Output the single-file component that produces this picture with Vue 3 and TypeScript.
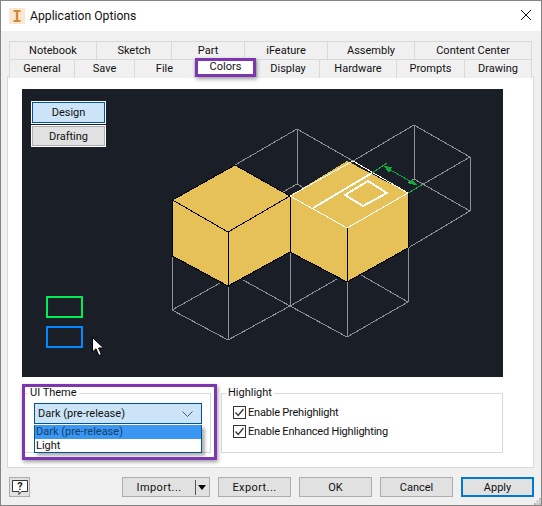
<script setup lang="ts">
const topTabs = ['Notebook', 'Sketch', 'Part', 'iFeature', 'Assembly', 'Content Center']
const bottomTabs = ['General', 'Save', 'File', 'Colors', 'Display', 'Hardware', 'Prompts', 'Drawing']

const wire = [
  'M235 165L297 129L353 161', 'M297 129V184', 'M297 184L283 192', 'M297 184L304 188',
  'M353 161L414 125L470 157V211', 'M414 125V179', 'M414 179L470 211', 'M470 157L408 193', 'M414 179L408 183',
  'M470 211L408 248',
  'M172 256V310', 'M172 310L220 283', 'M172 310L228 340', 'M228 286V340', 'M228 340L290 306',
  'M290 252V306', 'M290 306L243 280', 'M290 306L337 279', 'M290 306L347 337', 'M347 282V337',
  'M347 337L408 302', 'M408 248V302', 'M408 302L361 275',
]
</script>

<template>
  <div class="window">
    <header class="titlebar">
      <svg class="app-icon" width="16" height="16" viewBox="0 0 16 16">
        <rect width="16" height="16" fill="#fde6d0" />
        <path d="M4.5 2H11.5V4H9.2V12H11.5V14H4.5V12H6.8V4H4.5Z" fill="#d08a3c" />
      </svg>
      <span class="title">Application Options</span>
      <svg class="close" width="10" height="10" viewBox="0 0 10 10">
        <path d="M0 0L10 10M10 0L0 10" stroke="#111" stroke-width="1" fill="none" />
      </svg>
    </header>

    <main class="body">
      <div class="tabs">
        <div class="tab-row row-top">
          <div v-for="t in topTabs" :key="t" class="tab">{{ t }}</div>
        </div>
        <div class="tab-row row-bottom">
          <div v-for="t in bottomTabs" :key="t" class="tab" :class="{ active: t === 'Colors' }">
            {{ t }}
            <span v-if="t === 'Colors'" class="callout callout-tab"></span>
          </div>
        </div>
      </div>

      <section class="panel">
        <div class="canvas">
          <svg class="scene" width="481" height="288" viewBox="22 89 481 288" shape-rendering="crispEdges">
            <path v-for="d in wire" :key="d" :d="d" stroke="#8f9194" fill="none" />
            <path d="M172.5 200L235 165L290 196L347 161L408 193V248L347 282L290 252L228 286L172.5 256Z" fill="#e5c158" />
            <path d="M172.5 200L235 165L290 196L228 232ZM172.5 200V256L228 286V232M290 196V252M228 286L290 252" stroke="#000" fill="none" />
            <path d="M290 252L347 282L408 248V193" stroke="#000" fill="none" />
            <path d="M347 228V282" stroke="#000" fill="none" />
            <path d="M290 196L353 161L408 193L347 228Z" stroke="#fff" fill="none" />
            <path d="M313 208L372 173" stroke="#fff" stroke-width="2" fill="none" />
            <path d="M368 181L387 193L363 206L345 195Z" stroke="#fff" stroke-width="2" fill="none" />
            <path d="M372 173L387 163M408 193L423 184M387 168L415 184" stroke="#0fa83c" fill="none" />
            <path d="M384 166L392 167L389 173ZM417 185L409 184L412 179Z" fill="#0fa83c" />
          </svg>
          <div class="view-switch">
            <button class="view-btn selected">Design</button>
            <button class="view-btn">Drafting</button>
          </div>
          <div class="swatch green"></div>
          <div class="swatch blue"></div>
          <svg class="cursor" width="14" height="20" viewBox="0 0 14 20">
            <path d="M1.5 .5V15L5 11.8L7.8 18.5L10.4 17.4L7.6 11H12.5Z" fill="#fff" stroke="#000" />
          </svg>
        </div>

        <div class="groups">
          <fieldset class="group theme">
            <legend>UI Theme</legend>
            <div class="combo">
              <span>Dark (pre-release)</span>
              <svg width="11" height="6" viewBox="0 0 11 6"><path d="M.5 .5L5.5 5.5L10.5 .5" stroke="#555" fill="none" /></svg>
            </div>
            <ul class="list">
              <li class="current">Dark (pre-release)</li>
              <li>Light</li>
            </ul>
            <span class="callout callout-theme"></span>
          </fieldset>
          <fieldset class="group highlight">
            <legend>Highlight</legend>
            <label class="check">
              <svg width="13" height="13" viewBox="0 0 13 13"><rect x=".5" y=".5" width="12" height="12" fill="#fff" stroke="#333" /><path d="M2.5 6.5L5.2 9.5L10.5 3" stroke="#333" stroke-width="1.3" fill="none" /></svg>
              Enable Prehighlight
            </label>
            <label class="check">
              <svg width="13" height="13" viewBox="0 0 13 13"><rect x=".5" y=".5" width="12" height="12" fill="#fff" stroke="#333" /><path d="M2.5 6.5L5.2 9.5L10.5 3" stroke="#333" stroke-width="1.3" fill="none" /></svg>
              Enable Enhanced Highlighting
            </label>
          </fieldset>
        </div>
      </section>

      <footer class="footer">
        <button class="btn help" aria-label="Help">
          <svg width="17" height="17" viewBox="0 0 17 17">
            <path d="M1.5 1.5H16.5V12.5H10.5L8 15.5V12.5H1.5Z" fill="#fff" stroke="#333" />
            <text x="9" y="11" text-anchor="middle" class="q">?</text>
          </svg>
        </button>
        <button class="btn import">
          <span class="import-label wide">Import...</span>
          <span class="split"></span>
          <span class="caret"></span>
        </button>
        <button class="btn export wide">Export...</button>
        <button class="btn">OK</button>
        <button class="btn">Cancel</button>
        <button class="btn default">Apply</button>
      </footer>
      <svg class="grip" width="7" height="7" viewBox="0 0 7 7" fill="#bdbdbd">
        <rect x="5" y="0" width="2" height="2" /><rect x="2.5" y="2.5" width="2" height="2" /><rect x="5" y="2.5" width="2" height="2" />
        <rect x="0" y="5" width="2" height="2" /><rect x="2.5" y="5" width="2" height="2" /><rect x="5" y="5" width="2" height="2" />
      </svg>
    </main>
  </div>
</template>

<style>
html, body { margin: 0; background: #f0f0f0; }
</style>

<style scoped>
.window {
  box-sizing: border-box;
  width: 542px;
  height: 506px;
  border: 1px solid #858585;
  display: flex;
  flex-direction: column;
  background: #f0f0f0;
  font: 11px/16px Roboto, "Liberation Sans", sans-serif;
  color: #111;
  overflow: hidden;
}
.titlebar {
  height: 30px;
  flex: none;
  background: #fff;
  display: flex;
  align-items: center;
  padding: 0 10px 0 8px;
}
.app-icon { margin-right: 5px; }
.title { flex: 1; font-size: 12.2px; }
.close { margin-bottom: 2px; }
.body {
  position: relative;
  flex: 1;
  padding: 10px 7px 0 6px;
  display: flex;
  flex-direction: column;
}
.tabs { margin: 0 2px 0 2px; }
.tab-row { display: grid; height: 18px; }
.row-top { grid-template-columns: 88px 75px 73px 83px 87px 1fr; }
.row-bottom { grid-template-columns: 66px 60px 60px 62px 63px 77px 68px 1fr; }
.tab {
  position: relative;
  box-sizing: border-box;
  border: 1px solid #d9d9d9;
  border-width: 1px 1px 0 0;
  text-align: center;
  line-height: 18px;
  background: #f0f0f0;
}
.tab:first-child { border-left-width: 1px; }
.active { background: #fff; line-height: 14px; z-index: 2; height: 19px; }
.callout {
  position: absolute;
  box-sizing: border-box;
  border: 3px solid #7e35b0;
  box-shadow: 1px 2px 4px rgba(0, 0, 0, .4);
  pointer-events: none;
}
.callout-tab { left: 0; right: 0; top: -2px; bottom: 1px; }
.panel {
  box-sizing: border-box;
  height: 392px;
  margin-top: -1px;
  border: 1px solid #d9d9d9;
  background: #fff;
  padding: 12px 0 0 14px;
}
.canvas {
  position: relative;
  width: 481px;
  height: 288px;
  background: #1a1e27;
}
.scene { display: block; }
.view-switch {
  position: absolute;
  left: 9px;
  top: 12px;
  width: 75px;
  display: flex;
  flex-direction: column;
  gap: 1px;
}
.view-btn {
  box-sizing: border-box;
  height: 22px;
  border: 1px solid #fff;
  box-shadow: inset 0 0 0 1px #adadad;
  background: #e1e1e1;
  font: inherit;
  color: inherit;
  padding: 1px 0 0;
}
.view-btn.selected {
  height: 23px;
  background: #cce4f7;
  box-shadow: inset 0 0 0 1px #005499;
}
.swatch {
  position: absolute;
  left: 24px;
  box-sizing: border-box;
  width: 37px;
  height: 22px;
  border: 2px solid;
}
.green { top: 207px; border-color: #00ee55; }
.blue { top: 237px; border-color: #0088ff; }
.cursor { position: absolute; left: 69px; top: 248px; }
.groups { display: flex; gap: 10px; margin: 9px 0 0 2px; }
.group {
  position: relative;
  margin: 0;
  box-sizing: border-box;
  height: 67px;
  border: 1px solid #d9d9d9;
  padding: 0;
  min-width: 0;
}
.group legend { padding: 0 2px; margin-left: 3px; line-height: 14px; }
.theme { width: 187px; }
.highlight { width: 282px; padding: 3px 0 0 11px; }
.highlight legend { margin-left: -7px; }
.combo {
  box-sizing: border-box;
  width: 168px;
  height: 21px;
  margin: 3px 0 0 9px;
  padding: 0 8px 0 3px;
  background: #cce4f7;
  border: 1px solid #005499;
  display: flex;
  align-items: center;
  justify-content: space-between;
}
.list {
  position: absolute;
  left: 9px;
  top: 25px;
  box-sizing: border-box;
  width: 168px;
  height: 28px;
  margin: 0;
  padding: 0;
  list-style: none;
  border: 1px solid #005499;
  border-top: 0;
  background: #fff;
  box-shadow: 3px 3px 3px rgba(0, 0, 0, .3);
  z-index: 1;
  line-height: 14px;
}
.list li { padding-left: 1px; height: 14px; }
.list .current { background: #3b97f2; color: #12406e; }
.callout-theme { left: -3px; top: -16px; width: 195px; height: 76px; z-index: 2; }
.check { display: flex; align-items: center; gap: 2px; height: 19px; letter-spacing: -.2px; }
.footer {
  display: flex;
  gap: 8px;
  margin: 9px 0 0 2px;
}
.btn {
  box-sizing: border-box;
  width: 73px;
  height: 20px;
  padding: 1px 0 0;
  border: 1px solid #adadad;
  background: #e1e1e1;
  font: inherit;
  color: inherit;
}
.wide { letter-spacing: .4px; }
.help { width: 21px; margin-right: auto; display: flex; align-items: center; justify-content: center; padding: 0; }
.q { font: bold 11px Roboto, sans-serif; fill: #222; }
.import { width: 88px; margin-right: 0; display: flex; align-items: center; }
.import-label { width: 72px; text-align: center; }
.split { width: 1px; height: 15px; background: #555; margin-right: 2px; }
.caret { width: 0; height: 0; border: 4px solid transparent; border-top: 5px solid #000; border-bottom: 0; }
.export { width: 73px; }
.default { border: 2px solid #0078d7; }
.grip { position: absolute; right: 0; bottom: 0; }
</style>
